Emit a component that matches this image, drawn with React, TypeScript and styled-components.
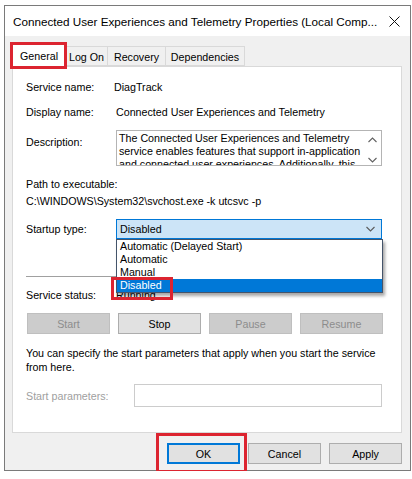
import React from "react";
import styled, { createGlobalStyle } from "styled-components";

const Global = createGlobalStyle`
  html, body { margin: 0; background: #ffffff; }
  body {
    font-family: "Liberation Sans", Arial, sans-serif;
    font-size: 10.7px;
    color: #000;
  }
  * { box-sizing: border-box; }
`;

const Window = styled.div`
  position: relative;
  margin: 5px 0 0 4px;
  width: 407px;
  height: 466px;
  border: 1px solid #7a7a7a;
  background: #f0f0f0;
  display: flex;
  flex-direction: column;
`;

const TitleBar = styled.div`
  height: 30px;
  background: #ffffff;
  display: flex;
  align-items: center;
  justify-content: space-between;
  padding: 0 10px 0 8px;
  font-size: 11.7px;
`;

const CloseIcon = () => (
  <svg width="11" height="11" viewBox="0 0 11 11">
    <path d="M0.5 0.5 L10.5 10.5 M10.5 0.5 L0.5 10.5" stroke="#111" strokeWidth="1" />
  </svg>
);

const Body = styled.div`
  flex: 1;
  display: flex;
  flex-direction: column;
  padding: 0 8px 6px 7px;
`;

const TabStrip = styled.div`
  height: 30px;
  display: flex;
  align-items: flex-end;
  position: relative;
  z-index: 1;
`;

const Tab = styled.div<{ $w: number; $active?: boolean }>`
  position: relative;
  width: ${(p) => p.$w}px;
  height: ${(p) => (p.$active ? 24 : 20)}px;
  margin-bottom: ${(p) => (p.$active ? -1 : 0)}px;
  margin-left: -1px;
  display: flex;
  align-items: center;
  justify-content: center;
  padding-top: ${(p) => (p.$active ? 0 : 1)}px;
  background: ${(p) => (p.$active ? "#ffffff" : "#f0f0f0")};
  border: 1px solid #d9d9d9;
  border-bottom: ${(p) => (p.$active ? "none" : "1px solid #d9d9d9")};
  &:first-child { margin-left: 0; }
`;

const Highlight = styled.div<{ $top: number; $left: number; $w: number; $h: number }>`
  position: absolute;
  top: ${(p) => p.$top}px;
  left: ${(p) => p.$left}px;
  width: ${(p) => p.$w}px;
  height: ${(p) => p.$h}px;
  border: 3px solid #dc2430;
  pointer-events: none;
  z-index: 5;
`;

const Panel = styled.div`
  height: 367px;
  background: #ffffff;
  border: 1px solid #d9d9d9;
  padding: 0 18px 0 13px;
  display: flex;
  flex-direction: column;
`;

const Field = styled.div<{ $mt: number; $top?: boolean }>`
  position: relative;
  display: flex;
  align-items: ${(p) => (p.$top ? "flex-start" : "center")};
  margin-top: ${(p) => p.$mt}px;
  line-height: 16px;
`;

const Label = styled.span<{ $w?: number; $mt?: number; $disabled?: boolean }>`
  flex-shrink: 0;
  width: ${(p) => p.$w ?? 90}px;
  margin-top: ${(p) => p.$mt ?? 0}px;
  color: ${(p) => (p.$disabled ? "#a0a0a0" : "#000")};
`;

const Value = styled.span<{ $ml?: number }>`
  margin-left: ${(p) => p.$ml ?? 0}px;
`;

const DescBox = styled.div`
  position: relative;
  width: 266px;
  height: 36px;
  border: 1px solid #b4b4b4;
  overflow: hidden;
  display: flex;
`;

const DescText = styled.div`
  flex: 1;
  padding: 1px 0 0 2px;
  line-height: 13px;
  white-space: nowrap;
`;

const ScrollBar = styled.div`
  width: 17px;
  display: flex;
  flex-direction: column;
  align-items: center;
  justify-content: space-between;
  padding: 6px 0 2px;
  background: #ffffff;
`;

const Chevron = ({ up, color = "#606060" }: { up?: boolean; color?: string }) => (
  <svg width="9" height="6" viewBox="0 0 9 6">
    <path
      d={up ? "M0.5 5 L4.5 1 L8.5 5" : "M0.5 1 L4.5 5 L8.5 1"}
      stroke={color}
      strokeWidth="1.1"
      fill="none"
    />
  </svg>
);

const PathBlock = styled.div`
  margin-top: 10px;
  line-height: 17px;
`;

const Combo = styled.div`
  position: relative;
  width: 266px;
  height: 20px;
  background: #cce4f7;
  border: 1px solid #0078d7;
  display: flex;
  align-items: center;
  justify-content: space-between;
  padding: 0 6px 0 3px;
`;

const DropList = styled.div`
  position: absolute;
  top: 19px;
  left: -1px;
  width: 267px;
  background: #ffffff;
  border: 1px solid #44546a;
  box-shadow: 2px 3px 3px rgba(0, 0, 0, 0.35);
  z-index: 3;
`;

const DropItem = styled.div<{ $selected?: boolean }>`
  position: relative;
  height: 13px;
  line-height: 13px;
  padding-left: 3px;
  background: ${(p) => (p.$selected ? "#0078d7" : "#ffffff")};
  color: ${(p) => (p.$selected ? "#ffffff" : "#000")};
`;

const Separator = styled.div`
  margin-top: 37px;
  height: 1px;
  background: #a0a0a0;
`;

const ButtonGrid = styled.div`
  margin-top: 10px;
  display: grid;
  grid-template-columns: repeat(4, 1fr);
  gap: 8px;
  padding-left: 1px;
`;

const Button = styled.div<{ $disabled?: boolean; $default?: boolean; $w?: number }>`
  position: relative;
  height: 21px;
  ${(p) => (p.$w ? `width: ${p.$w}px;` : "")}
  display: flex;
  align-items: center;
  justify-content: center;
  background: ${(p) => (p.$disabled ? "#cccccc" : "#e1e1e1")};
  border: ${(p) =>
    p.$default ? "2px solid #0078d7" : p.$disabled ? "1px solid #bfbfbf" : "1px solid #adadad"};
  color: ${(p) => (p.$disabled ? "#8c8c8c" : "#000")};
`;

const Info = styled.div`
  margin-top: 12px;
  line-height: 14px;
`;

const ParamInput = styled.div`
  width: 248px;
  height: 23px;
  border: 1px solid #cccccc;
  background: #ffffff;
`;

const DialogButtons = styled.div`
  margin-top: 10px;
  display: flex;
  justify-content: flex-end;
  gap: 8px;
`;

export default function App() {
  return (
    <>
      <Global />
      <Window>
        <TitleBar>
          <span>Connected User Experiences and Telemetry Properties (Local Comp...</span>
          <CloseIcon />
        </TitleBar>
        <Body>
          <TabStrip>
            <Tab $w={54} $active>
              General
              <Highlight $top={-2} $left={-3} $w={57} $h={27} />
            </Tab>
            <Tab $w={43}>Log On</Tab>
            <Tab $w={59}>Recovery</Tab>
            <Tab $w={80}>Dependencies</Tab>
          </TabStrip>
          <Panel>
            <Field $mt={12}>
              <Label>Service name:</Label>
              <Value $ml={-2}>DiagTrack</Value>
            </Field>
            <Field $mt={9}>
              <Label>Display name:</Label>
              <Value>Connected User Experiences and Telemetry</Value>
            </Field>
            <Field $mt={10} $top>
              <Label $mt={4}>Description:</Label>
              <DescBox>
                <DescText>
                  The Connected User Experiences and Telemetry
                  <br />
                  service enables features that support in-application
                  <br />
                  and connected user experiences. Additionally, this
                </DescText>
                <ScrollBar>
                  <Chevron up />
                  <Chevron />
                </ScrollBar>
              </DescBox>
            </Field>
            <PathBlock>
              <div>Path to executable:</div>
              <div>C:\WINDOWS\System32\svchost.exe -k utcsvc -p</div>
            </PathBlock>
            <Field $mt={9}>
              <Label>Startup type:</Label>
              <Combo>
                <span>Disabled</span>
                <Chevron color="#5a5a5a" />
                <DropList>
                  <DropItem>Automatic (Delayed Start)</DropItem>
                  <DropItem>Automatic</DropItem>
                  <DropItem>Manual</DropItem>
                  <DropItem $selected>
                    Disabled
                    <Highlight $top={-2} $left={-6} $w={62} $h={23} />
                  </DropItem>
                </DropList>
              </Combo>
            </Field>
            <Separator />
            <Field $mt={10}>
              <Label>Service status:</Label>
              <Value>Running</Value>
            </Field>
            <ButtonGrid>
              <Button $disabled>Start</Button>
              <Button>Stop</Button>
              <Button $disabled>Pause</Button>
              <Button $disabled>Resume</Button>
            </ButtonGrid>
            <Info>
              You can specify the start parameters that apply when you start the service
              <br />
              from here.
            </Info>
            <Field $mt={10}>
              <Label $w={108} $disabled>
                Start parameters:
              </Label>
              <ParamInput />
            </Field>
          </Panel>
          <DialogButtons>
            <Button $w={73} $default>
              OK
              <Highlight $top={-12} $left={-13} $w={91} $h={40} />
            </Button>
            <Button $w={73}>Cancel</Button>
            <Button $w={73}>Apply</Button>
          </DialogButtons>
        </Body>
      </Window>
    </>
  );
}
